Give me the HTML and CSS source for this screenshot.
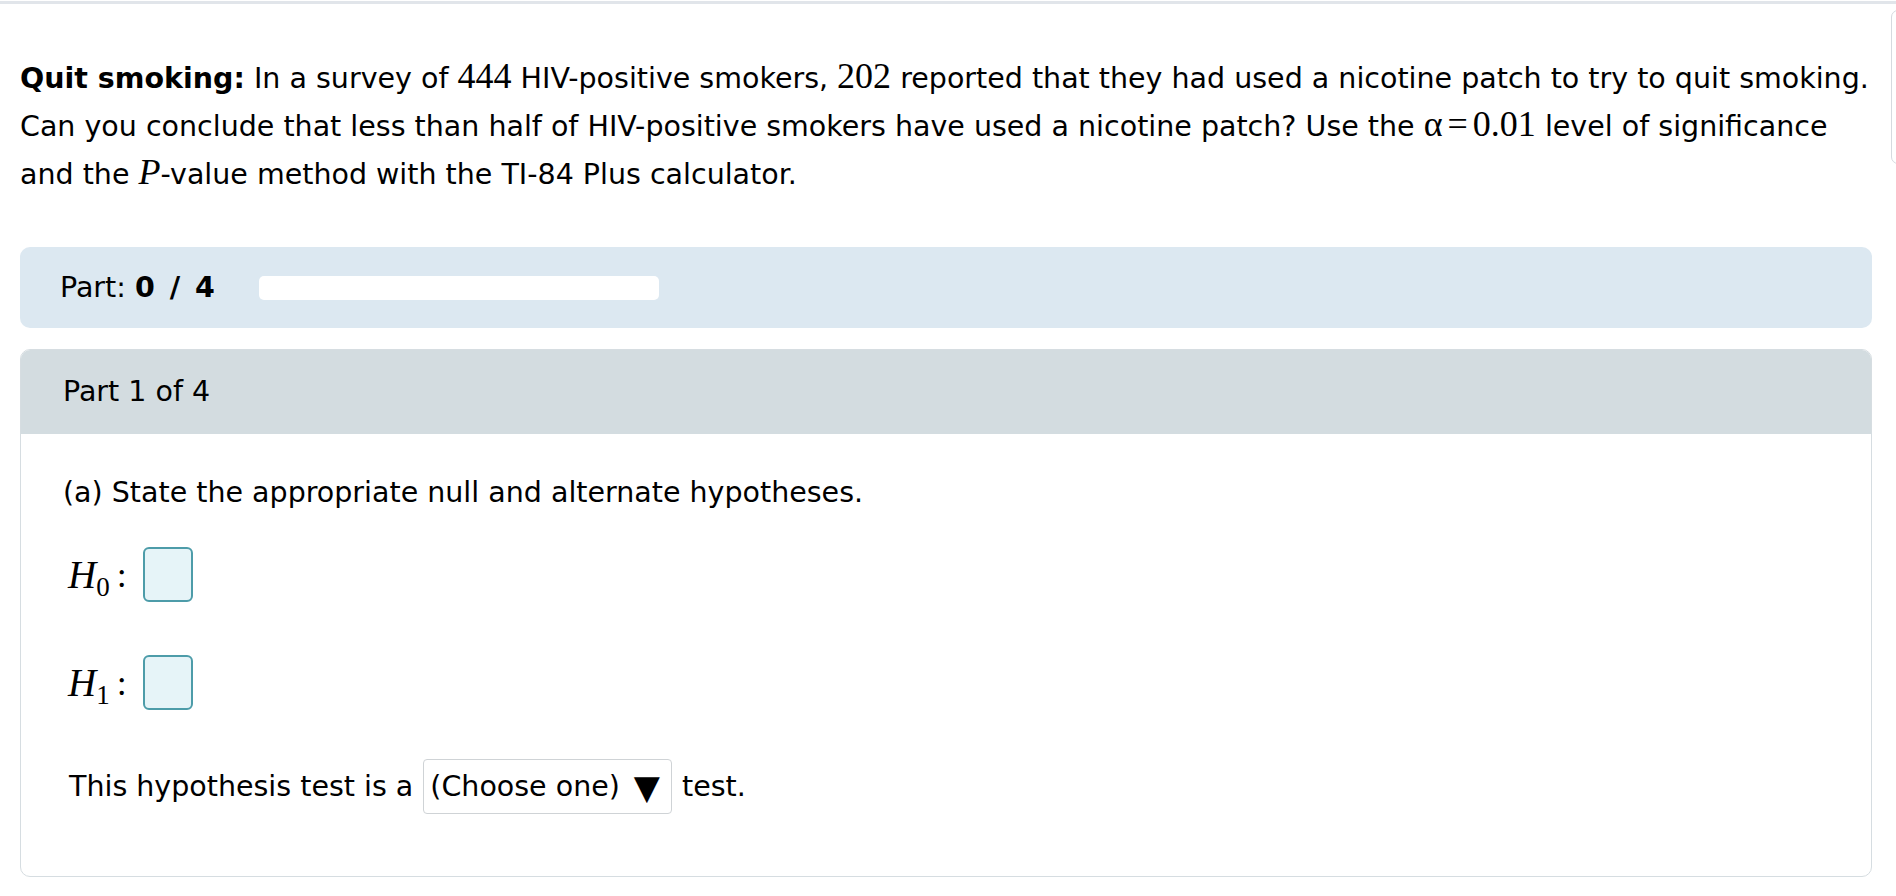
FILE: index.html
```html
<!DOCTYPE html>
<html lang="en">
<head>
	<meta charset="UTF-8">
	<title>Quit smoking</title>
	<link rel="stylesheet" href="styles.css">
</head>
<body>
	<div class="topline"></div>
	<div class="page">
		<div class="main">
			<p class="problem">
				<b>Quit smoking:</b> In a survey of <span class="m">444</span> HIV-positive smokers, <span class="m">202</span> reported that they had used a nicotine patch to try to quit smoking.<br>
				Can you conclude that less than half of HIV-positive smokers have used a nicotine patch? Use the <span class="m">α<span class="eq">=</span>0.01</span> level of significance<br>
				and the <span class="m"><i>P</i></span>-value method with the TI-84 Plus calculator.
			</p>

			<div class="progress">
				<span class="progress-label">Part: <b>0 / 4</b></span>
				<div class="bar"></div>
			</div>

			<div class="part">
				<div class="part-head">Part 1 of 4</div>
				<div class="part-body">
					<p class="question">(a) State the appropriate null and alternate hypotheses.</p>

					<div class="hyp">
						<span class="m"><i>H</i><sub>0</sub></span><span class="colon">:</span>
						<span class="answer"></span>
					</div>
					<div class="hyp">
						<span class="m"><i>H</i><sub>1</sub></span><span class="colon">:</span>
						<span class="answer"></span>
					</div>

					<div class="choose-row">
						<span>This hypothesis test is a</span>
						<span class="select">(Choose one) <span class="arrow">▼</span></span>
						<span>test.</span>
					</div>
				</div>
			</div>
		</div>
		<div class="side">
			<div class="side-box"></div>
		</div>
	</div>
</body>
</html>
```

FILE: styles.css
```css
html, body {
	margin: 0;
	padding: 0;
	background: #fff;
	overflow: hidden;
}

body {
	font-family: "DejaVu Sans", Verdana, sans-serif;
	font-size: 28.5px;
	line-height: 48px;
	color: #000;
}

.topline {
	height: 3px;
	margin-top: 1px;
	background-color: #e1e5ea;
}

.page {
	display: flex;
	align-items: flex-start;
}

.main {
	flex: 0 0 1852px;
	margin-left: 20px;
}

.side {
	flex: 0 0 200px;
	margin-left: 19px;
	padding-top: 6px;
}

.side-box {
	height: 152px;
	border: 1px solid #d5dadf;
	border-radius: 7px;
}

.problem {
	margin: 51px 0 0 0;
	white-space: nowrap;
}

.m {
	font-family: "Liberation Serif", "Times New Roman", serif;
	font-size: 36px;
	line-height: 0;
}

.eq {
	padding: 0 5px;
}

.progress {
	display: flex;
	align-items: center;
	margin-top: 48px;
	height: 81px;
	padding-left: 40px;
	background-color: #dce8f1;
	border-radius: 10px;
}

.progress-label b {
	letter-spacing: 2.5px;
}

.bar {
	width: 400px;
	height: 24px;
	margin-left: 42px;
	background-color: #fff;
	border-radius: 5px;
}

.part {
	margin-top: 21px;
	border: 1px solid #d6dde1;
	border-radius: 10px;
	overflow: hidden;
}

.part-head {
	height: 84px;
	display: flex;
	align-items: center;
	padding-left: 42px;
	background-color: #d3dce0;
}

.part-body {
	padding: 35px 0 62px 42px;
}

.question {
	margin: 0;
}

.hyp {
	display: flex;
	align-items: center;
	height: 55px;
	margin-top: 30px;
	padding-left: 5px;
}

.hyp + .hyp {
	margin-top: 53px;
}

.hyp .m {
	font-size: 39px;
	line-height: 40px;
}

.hyp sub {
	font-size: 27px;
	vertical-align: -8px;
	line-height: 0;
}

.colon {
	font-family: "Liberation Serif", serif;
	font-size: 36px;
	margin-left: 7px;
}

.answer {
	width: 46px;
	height: 51px;
	margin-left: 16px;
	border: 2px solid #4d9ca9;
	border-radius: 6px;
	background-color: #e6f4f8;
}

.choose-row {
	display: flex;
	align-items: center;
	gap: 10px;
	margin-top: 49px;
	padding-left: 6px;
}

.select {
	display: inline-flex;
	align-items: center;
	height: 53px;
	padding: 0 11px 0 6px;
	border: 1px solid #cfd3d6;
	border-radius: 4px;
	background: #fff;
}

.arrow {
	margin-left: 14px;
	font-size: 34px;
}
```
